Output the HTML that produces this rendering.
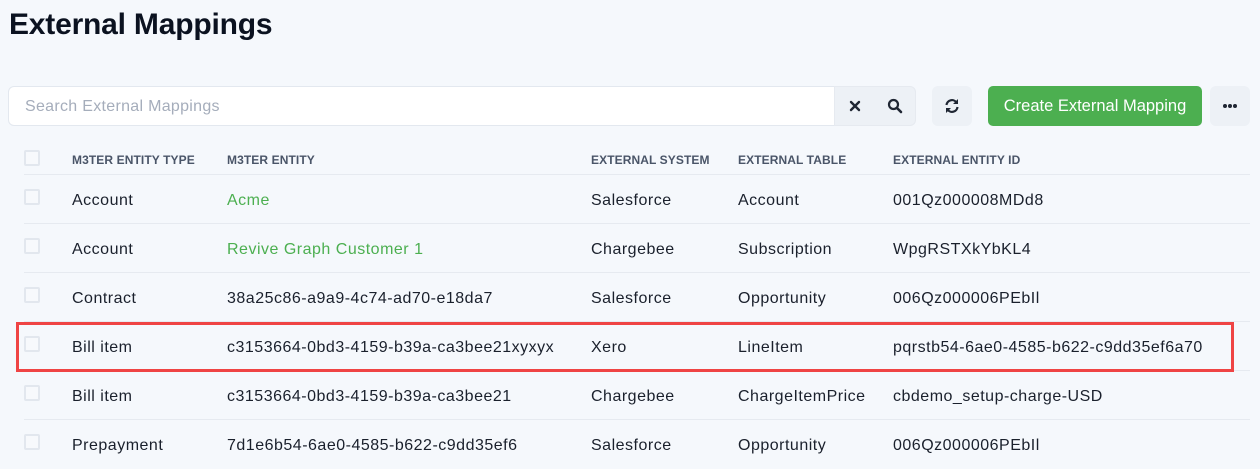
<!DOCTYPE html>
<html><head><style>
*{box-sizing:border-box;margin:0;padding:0}
body{width:1260px;height:468px;background:#f5f8fc;font-family:"Liberation Sans",sans-serif;color:#1a202c;position:relative;overflow:hidden}
h1{position:absolute;left:9px;top:8px;font-size:30px;font-weight:bold;color:#0b1220;letter-spacing:-0.2px}
.search{position:absolute;left:8px;top:86px;width:827px;height:40px;background:#fff;border:1px solid #e3e8ef;border-radius:6px 0 0 6px;font-size:16px;letter-spacing:0.3px;color:#a5adbb;padding:11px 16px}
.grp{position:absolute;left:834px;top:86px;width:82px;height:40px;background:#edf1f6;border-radius:0 6px 6px 0;border:1px solid #e6eaf0}
.btn{position:absolute;top:86px;height:40px;background:#edf1f6;border-radius:6px}
.green{position:absolute;left:988px;top:86px;width:214px;height:40px;background:#4caf50;border-radius:5px;color:#fff;font-size:16.5px;text-align:center;line-height:41px}
.row{position:absolute;left:24px;width:1226px;height:49px;border-bottom:1px solid #e6eaf0}
.cb{position:absolute;left:0;width:16px;height:16px;border:2px solid #e2e7ee;border-radius:2px;background:#f7f9fc}
.c{position:absolute;font-size:16px;letter-spacing:0.5px;white-space:nowrap;top:17px}
.h .c{font-size:12px;font-weight:bold;color:#4a5568;letter-spacing:0.1px;top:12px}
.g{color:#4caf50}
</style></head><body>
<h1>External Mappings</h1>
<div class="search">Search External Mappings</div>
<div class="grp">
<svg style="position:absolute;left:14px;top:13px" width="12" height="12" viewBox="0 0 12 12"><path d="M2 2L10 10M10 2L2 10" stroke="#1f2633" stroke-width="2.4" stroke-linecap="round"/></svg>
<svg style="position:absolute;left:52px;top:11px" width="16" height="16" viewBox="0 0 16 16"><circle cx="6.5" cy="6.5" r="4.5" fill="none" stroke="#1f2633" stroke-width="2.2"/><path d="M10 10L14 14" stroke="#1f2633" stroke-width="2.6" stroke-linecap="round"/></svg>
</div>
<div class="btn" style="left:932px;width:40px">
<svg style="position:absolute;left:12px;top:12px" width="16" height="16" viewBox="0 0 16 16"><path d="M2.5 7A5.5 5.5 0 0 1 12.5 4.5M13.5 9A5.5 5.5 0 0 1 3.5 11.5" fill="none" stroke="#1f2633" stroke-width="2.2"/><path d="M14 1V6H9Z M2 15V10H7Z" fill="#1f2633"/></svg>
</div>
<div class="green">Create External Mapping</div>
<div class="btn" style="left:1210px;width:40px">
<svg style="position:absolute;left:12px;top:17px" width="16" height="6"><circle cx="3" cy="3" r="2" fill="#1f2633"/><circle cx="8" cy="3" r="2" fill="#1f2633"/><circle cx="13" cy="3" r="2" fill="#1f2633"/></svg>
</div>

<div class="row h" style="top:141px;height:34px"><div class="cb" style="top:9px"></div><div class="c" style="left:48px">M3TER ENTITY TYPE</div><div class="c" style="left:203px">M3TER ENTITY</div><div class="c" style="left:567px">EXTERNAL SYSTEM</div><div class="c" style="left:714px">EXTERNAL TABLE</div><div class="c" style="left:869px">EXTERNAL ENTITY ID</div></div>

<div class="row" style="top:175px"><div class="cb" style="top:14px"></div><div class="c" style="left:48px">Account</div><div class="c g" style="left:203px">Acme</div><div class="c" style="left:567px">Salesforce</div><div class="c" style="left:714px">Account</div><div class="c" style="left:869px">001Qz000008MDd8</div></div>
<div class="row" style="top:224px"><div class="cb" style="top:14px"></div><div class="c" style="left:48px">Account</div><div class="c g" style="left:203px">Revive Graph Customer 1</div><div class="c" style="left:567px">Chargebee</div><div class="c" style="left:714px">Subscription</div><div class="c" style="left:869px">WpgRSTXkYbKL4</div></div>
<div class="row" style="top:273px"><div class="cb" style="top:14px"></div><div class="c" style="left:48px">Contract</div><div class="c" style="left:203px">38a25c86-a9a9-4c74-ad70-e18da7</div><div class="c" style="left:567px">Salesforce</div><div class="c" style="left:714px">Opportunity</div><div class="c" style="left:869px">006Qz000006PEbIl</div></div>
<div class="row" style="top:322px"><div class="cb" style="top:14px"></div><div class="c" style="left:48px">Bill item</div><div class="c" style="left:203px">c3153664-0bd3-4159-b39a-ca3bee21xyxyx</div><div class="c" style="left:567px">Xero</div><div class="c" style="left:714px">LineItem</div><div class="c" style="left:869px">pqrstb54-6ae0-4585-b622-c9dd35ef6a70</div></div>
<div class="row" style="top:371px"><div class="cb" style="top:14px"></div><div class="c" style="left:48px">Bill item</div><div class="c" style="left:203px">c3153664-0bd3-4159-b39a-ca3bee21</div><div class="c" style="left:567px">Chargebee</div><div class="c" style="left:714px">ChargeItemPrice</div><div class="c" style="left:869px">cbdemo_setup-charge-USD</div></div>
<div class="row" style="top:420px;border-bottom:none"><div class="cb" style="top:14px"></div><div class="c" style="left:48px">Prepayment</div><div class="c" style="left:203px">7d1e6b54-6ae0-4585-b622-c9dd35ef6</div><div class="c" style="left:567px">Salesforce</div><div class="c" style="left:714px">Opportunity</div><div class="c" style="left:869px">006Qz000006PEbIl</div></div>

<div style="position:absolute;left:16px;top:322px;width:1218px;height:50px;border:3px solid #ef4444"></div>
</body></html>
